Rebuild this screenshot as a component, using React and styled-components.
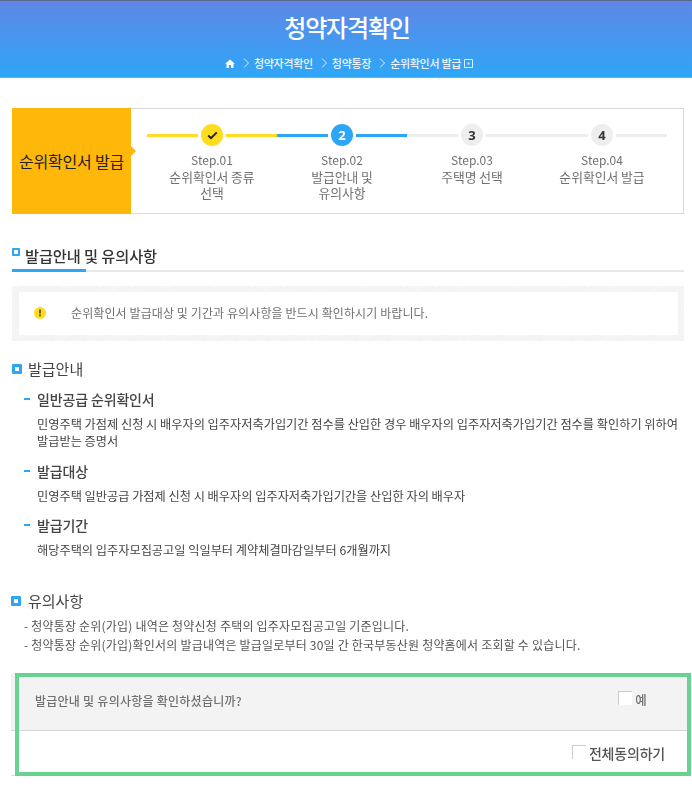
import React from "react";
import styled, { createGlobalStyle } from "styled-components";

const Global = createGlobalStyle`
  html, body { margin: 0; padding: 0; background: #fff; }
  body { font-family: "Noto Sans CJK KR", "Noto Sans", sans-serif; color: #333; width: 692px; height: 791px; overflow: hidden; word-break: keep-all; }
  * { box-sizing: border-box; }
  #root { filter: blur(0.5px); }
`;
const Header = styled.header`
  height: 78px; border-top: 1px solid #5a6790; border-bottom: 1px solid #55b8fb;
  background: linear-gradient(#5f87e6, #2ea6f7); color: #fff; text-align: center;
  display: flex; flex-direction: column; align-items: center;
`;
const Title = styled.h1`
  margin: 11px 0 0; font-size: 24px; line-height: 30px; font-weight: 500; letter-spacing: -1.15px; padding-left: 2px;
`;
const Crumbs = styled.nav`
  margin-top: 13px; display: flex; align-items: center; height: 16px; font-size: 11px; font-weight: 500; letter-spacing: -0.3px; color: #eef6ff; padding-left: 6px;
`;
const Chevron = styled.svg`
  width: 6px; height: 10px; margin: 0 5px 0 8px; flex: none;
`;
const Main = styled.main`
  padding: 30px 8px 0 12px;
`;
const Steps = styled.section`
  display: flex; height: 106px; border: 1px solid #d9d9d9; border-left: 0;
`;
const StepsLabel = styled.div`
  position: relative; width: 119px; margin: -1px 0; background: #ffb80a; color: #222;
  display: flex; align-items: center; justify-content: center;
  font-size: 16px; font-weight: 400; letter-spacing: -0.2px; white-space: nowrap;
  &::after {
    content: ""; position: absolute; right: -5px; top: 38px;
    border-left: 5px solid #ffb80a; border-top: 5px solid transparent; border-bottom: 5px solid transparent;
  }
`;
const StepList = styled.ol`
  list-style: none; margin: 0; padding: 14px 0 0 16px; display: grid; grid-template-columns: repeat(4, 130px); align-content: start;
`;
const Step = styled.li`
  display: flex; flex-direction: column; align-items: center; text-align: center;
  color: #707070;
`;
const Track = styled.div`
  width: 100%; height: 24px; display: flex; align-items: center; justify-content: center; margin-bottom: 4px;
  background: linear-gradient(${p => p.$color}, ${p => p.$color}) no-repeat 0 center / 100% 3px;
`;
const Dot = styled.span`
  width: 22px; height: 22px; border-radius: 50%; background: ${p => p.$bg}; color: ${p => p.$fg};
  box-shadow: 0 0 0 3px #fff; display: flex; align-items: center; justify-content: center;
  font-size: 13px; font-weight: 700; font-family: "Noto Sans", sans-serif;
`;
const StepNo = styled.div`
  font-size: 12px; line-height: 17px; margin-bottom: 1px;
`;
const StepName = styled.div`
  width: 100px; font-size: 12.8px; line-height: 16px;
`;
const SectionHead = styled.div`
  position: relative; margin-top: 30px; height: 28px; border-bottom: 2px solid #e8e8e8;
  display: flex; align-items: center; gap: 5px; padding-bottom: 5px; font-size: 15.25px; font-weight: 500; color: #333; letter-spacing: -0.1px;
  &::after { content: ""; position: absolute; left: 0; bottom: -2px; width: 74px; height: 3px; background: #2ea6f7; }
`;
const Square = styled.i`
  display: block; flex: none; width: ${p => p.$size}px; height: ${p => p.$size}px; border: ${p => p.$weight}px solid #2ea6f7; background: #fff; border-radius: 1px;
  margin: ${p => p.$lift || 0}px ${p => p.$nudge || 0}px 0 ${p => -(p.$nudge || 0)}px;
`;
const Alert = styled.div`
  margin-top: 14px; height: 55px; padding: 6px;
  padding-left: 7px;
  background: repeating-linear-gradient(135deg, #f1f1f1 0 1px, #f6f6f6 1px 2.5px);
`;
const AlertInner = styled.div`
  height: 100%; background: #fff; display: flex; align-items: center; padding: 0 0 2px 15px; gap: 25px;
  font-size: 12px; letter-spacing: 0.1px; color: #707070;
`;
const H3 = styled.h3`
  margin: ${p => p.$top}px 0 0; display: flex; align-items: center; gap: 6px; font-size: 15px; line-height: 20px; font-weight: 400; color: #444;
`;
const Items = styled.div`
  padding-left: 12px; margin-top: 10px;
`;
const ItemTitle = styled.h4`
  margin: 0; display: flex; align-items: center; height: 20px; gap: 7px; font-size: 14px; letter-spacing: -0.15px; font-weight: 500; color: #444;
  &::before { content: ""; width: 6px; height: 2px; background: #2ea6f7; }
`;
const ItemBody = styled.p`
  margin: 7px 0 10.5px 13px; font-size: 12.2px; line-height: 17px; color: #444;
`;
const Notes = styled.ul`
  list-style: none; margin: 5px 0 0; padding-left: 12px; font-size: 12px; letter-spacing: 0.2px; line-height: 19px; color: #555;
`;
const ConfirmWrap = styled.div`
  position: relative; margin: 19px 0 0 -1px; width: 677px;
`;
const Highlight = styled.div`
  position: absolute; inset: 0 -3px 0 4px; border: 4px solid #68d391; pointer-events: none;
`;
const QRow = styled.div`
  height: 58px; background: #f3f3f3; border-bottom: 1px solid #d5d5d5; display: flex; align-items: center; justify-content: space-between;
  padding: 0 41px 2px 24px; font-size: 12px; letter-spacing: 0.25px; font-weight: 500; color: #707070;
`;
const AllRow = styled.div`
  height: 45px; border-bottom: 1px solid #ddd; display: flex; align-items: center; justify-content: flex-end;
  padding: 0 23px 0 0; font-size: 14px; letter-spacing: -0.2px; font-weight: 500; color: #555;
`;
const YesCheck = styled.label`
  display: flex; align-items: center; gap: 3px; margin-top: -3px; font-size: 12.5px;
`;
const AllCheck = styled.label`
  display: flex; align-items: center; gap: 3px;
`;
const Box = styled.span`
  display: block; width: 14px; height: 14px; background: #fff; border-top: 1px solid #ccc; border-left: 1px solid #ccc; margin-top: -2px;
`;

const Arrow = () => (
  <Chevron viewBox="0 0 6 10"><path d="M1 .5 5.5 5 1 9.5" fill="none" stroke="#dcefff" strokeWidth="1" /></Chevron>
);
const steps = [
  { no: "Step.01", name: "순위확인서 종류 선택", line: "#ffdc2a", bg: "#ffdc1e", fg: "#222", mark: "check" },
  { no: "Step.02", name: "발급안내 및 유의사항", line: "#2ea6f7", bg: "#2ea6f7", fg: "#fff", mark: "2" },
  { no: "Step.03", name: "주택명 선택", line: "#eeeeee", bg: "#eeeeee", fg: "#333", mark: "3" },
  { no: "Step.04", name: "순위확인서 발급", line: "#eeeeee", bg: "#eeeeee", fg: "#333", mark: "4" },
];

export default function App() {
  return (
    <>
      <Global />
      <Header>
        <Title>청약자격확인</Title>
        <Crumbs>
          <svg width="10" height="9" viewBox="0 0 11 10"><path d="M5.5.5 0 5.2h1.6V10h2.7V6.8h2.4V10h2.7V5.2H11z" fill="#fff" /></svg>
          <Arrow /><span>청약자격확인</span>
          <Arrow /><span>청약통장</span>
          <Arrow /><span>순위확인서 발급</span>
          <svg width="9" height="9" viewBox="0 0 9 9" style={{ marginLeft: 3 }}><path d="M.5.5h8v8h-8z" fill="none" stroke="#dcefff" /><path d="M3.5 3.5h2v2h-2z" fill="#dcefff" /></svg>
        </Crumbs>
      </Header>
      <Main>
        <Steps>
          <StepsLabel>순위확인서 발급</StepsLabel>
          <StepList>
            {steps.map(s => (
              <Step key={s.no}>
                <Track $color={s.line}>
                  <Dot $bg={s.bg} $fg={s.fg}>
                    {s.mark === "check" ? (
                      <svg width="11" height="9" viewBox="0 0 11 9"><path d="M1.2 4.5 4 7.2 9.8 1.4" fill="none" stroke="#222" strokeWidth="2" /></svg>
                    ) : s.mark}
                  </Dot>
                </Track>
                <StepNo>{s.no}</StepNo>
                <StepName>{s.name}</StepName>
              </Step>
            ))}
          </StepList>
        </Steps>

        <SectionHead><Square $size={8} $weight={2} $lift={-6} />발급안내 및 유의사항</SectionHead>

        <Alert>
          <AlertInner>
            <svg width="12" height="12" viewBox="0 0 12 12" style={{ flex: "none" }}>
              <circle cx="6" cy="6" r="6" fill="#ffdc1e" /><path d="M5.2 2.6h1.6l-.2 4.2H5.4zM5.2 7.6h1.6v1.6H5.2z" fill="#333" />
            </svg>
            순위확인서 발급대상 및 기간과 유의사항을 반드시 확인하시기 바랍니다.
          </AlertInner>
        </Alert>

        <H3 $top={18}><Square $size={10} $weight={3} />발급안내</H3>
        <Items>
          <ItemTitle>일반공급 순위확인서</ItemTitle>
          <ItemBody>민영주택 가점제 신청 시 배우자의 입주자저축가입기간 점수를 산입한 경우 배우자의 입주자저축가입기간 점수를 확인하기 위하여 발급받는 증명서</ItemBody>
          <ItemTitle>발급대상</ItemTitle>
          <ItemBody>민영주택 일반공급 가점제 신청 시 배우자의 입주자저축가입기간을 산입한 자의 배우자</ItemBody>
          <ItemTitle>발급기간</ItemTitle>
          <ItemBody>해당주택의 입주자모집공고일 익일부터 계약체결마감일부터 6개월까지</ItemBody>
        </Items>

        <H3 $top={32}><Square $size={10} $weight={3} $nudge={1} />유의사항</H3>
        <Notes>
          <li>- 청약통장 순위(가입) 내역은 청약신청 주택의 입주자모집공고일 기준입니다.</li>
          <li>- 청약통장 순위(가입)확인서의 발급내역은 발급일로부터 30일 간 한국부동산원 청약홈에서 조회할 수 있습니다.</li>
        </Notes>

        <ConfirmWrap>
          <QRow>
            발급안내 및 유의사항을 확인하셨습니까?
            <YesCheck><Box />예</YesCheck>
          </QRow>
          <AllRow><AllCheck><Box />전체동의하기</AllCheck></AllRow>
          <Highlight />
        </ConfirmWrap>
      </Main>
    </>
  );
}
